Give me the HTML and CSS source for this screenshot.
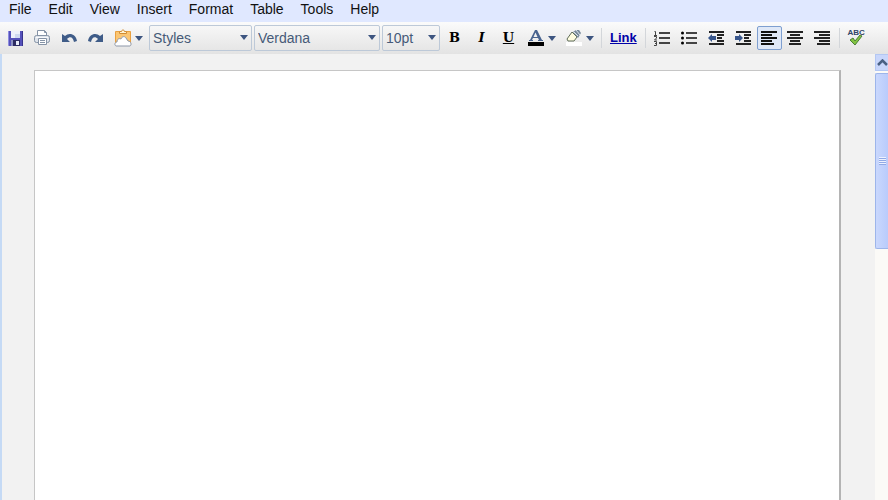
FILE: index.html
```html
<!DOCTYPE html>
<html lang="en">
<head>
<meta charset="utf-8">
<title>Document editor</title>
<link rel="stylesheet" href="styles.css">
</head>
<body>
<nav class="menubar" aria-label="Menu">
  <button>File</button>
  <button>Edit</button>
  <button>View</button>
  <button>Insert</button>
  <button>Format</button>
  <button>Table</button>
  <button>Tools</button>
  <button>Help</button>
</nav>

<div class="toolbar" role="toolbar" aria-label="Formatting">
  <button class="tool" aria-label="Save">
    <svg width="18" height="18" viewBox="0 0 18 18">
      <path d="M2 2h15v15H3l-1-1z" fill="#5551ba"/>
      <path d="M2 2h1v14H2z" fill="#8d8ce0"/>
      <path d="M16 2h1v15h-1z" fill="#37338c"/>
      <path d="M5 2h9v7H5z" fill="#eef1fb"/>
      <path d="M9 5h5v4H9z" fill="#cfd9f0"/>
      <path d="M5 11h9v6H5z" fill="#2c2b62"/>
      <path d="M10 12h3v4h-3z" fill="#e8ecf8"/>
      <path d="M5 11h2v6H5z" fill="#8b90c0"/>
    </svg>
  </button>
  <button class="tool" aria-label="Print">
    <svg width="18" height="18" viewBox="0 0 18 18" fill="none" stroke="#8593a6">
      <path d="M4.500 6V1.500h7l2 2V6" fill="#fff"/>
      <path d="M11.500 1.500v2h2"/>
      <rect x="1.500" y="6.500" width="15" height="7" rx="2" fill="#dfe4eb"/>
      <path d="M3 8.500h12" stroke="#f8f9fb"/>
      <path d="M5.500 9.500h8v6h-8z" fill="#fff"/>
      <path d="M7 11.500h5M7 13.500h5"/>
    </svg>
  </button>
  <button class="tool" aria-label="Undo">
    <svg width="18" height="18" viewBox="0 0 18 18">
      <path d="M2 5v8h8L7 10c3-3 6-2 7 3l3-1C16 5 9 3 5 7z" fill="#3f5c88"/>
    </svg>
  </button>
  <button class="tool" aria-label="Redo">
    <svg width="18" height="18" viewBox="0 0 18 18">
      <path d="M16 5v8H8l3-3C8 7 5 8 4 13l-3-1C2 5 9 3 13 7z" fill="#3f5c88"/>
    </svg>
  </button>
  <button class="tool tool-menu" aria-label="Web clipboard">
    <svg width="18" height="18" viewBox="0 0 18 18">
      <path d="M1.500 2.500h15v13h-15z" fill="#fbc673" stroke="#e9a040"/>
      <path d="M5.500 4.500v-2h2c0-2 3-2 3 0h2v2z" fill="#fff3d2" stroke="#d08c34"/>
      <path d="M2 17c-2-1-1-4 1-4 0-3 2-4 4-3 1-3 4-3 5-1l2 3c3 0 4 4 2 5z" fill="#fff" stroke="#8d97a8"/>
    </svg>
    <span class="arrow"></span>
  </button>

  <div class="pick pick-style">
    <select aria-label="Paragraph style"><option>Styles</option></select>
  </div>
  <div class="pick pick-font">
    <select aria-label="Font"><option>Verdana</option></select>
  </div>
  <div class="pick pick-size">
    <select aria-label="Font size"><option>10pt</option></select>
  </div>

  <button class="tool letter"><b>B</b></button>
  <button class="tool letter"><i>I</i></button>
  <button class="tool letter"><u>U</u></button>
  <button class="tool tool-menu" aria-label="Text color">
    <svg width="18" height="18" viewBox="0 0 18 18">
      <path d="M8 1h2l5 10h1v1h-5v-1h1l-1-2H6l-1 2h1v1H2v-1h1zM8.500 3.500L6.500 8h4z" fill="#49648f" fill-rule="evenodd"/>
      <path d="M1 13h16v4H1z" fill="#000"/>
    </svg>
    <span class="arrow"></span>
  </button>
  <button class="tool tool-menu" aria-label="Highlight color">
    <svg width="18" height="18" viewBox="0 0 18 18">
      <path d="M1 13h16v4H1z" fill="#fff"/>
      <path d="M7 3l5 5-3 4H3l-1-2z" fill="#fffde0" stroke="#5f6d58"/>
      <path d="M8 3l3-2h3l2 3-3 5z" fill="#788a9b"/>
      <path d="M11 1l4 5M9 3l4 4" stroke="#dfe5ea"/>
    </svg>
    <span class="arrow"></span>
  </button>
  <span class="divider"></span>
  <a class="link" href="#link">Link</a>
  <span class="divider"></span>
  <button class="tool" aria-label="Numbered list">
    <svg width="18" height="18" viewBox="0 0 18 18" fill="none">
      <path d="M6 4h11M6 9h11M6 14h11" stroke="#444" stroke-width="2"/>
      <path d="M1.500 2.500h1v4M1 6.500h3M1 7.500h2.500v1.500L1.500 11H4M1 12.500h2.500v4H1M2 14.500h1" stroke="#444"/>
    </svg>
  </button>
  <button class="tool" aria-label="Bulleted list">
    <svg width="18" height="18" viewBox="0 0 18 18">
      <path d="M6 4h11M6 9h11M6 14h11" stroke="#444" stroke-width="2"/>
      <circle cx="2.500" cy="4" r="1.500"/><circle cx="2.500" cy="9" r="1.500"/><circle cx="2.500" cy="14" r="1.500"/>
    </svg>
  </button>
  <button class="tool" aria-label="Decrease indent">
    <svg width="18" height="18" viewBox="0 0 18 18">
      <path d="M2 3h15M10 6h7M10 9h5M10 12h7M2 15h15" stroke="#222" stroke-width="2"/>
      <path d="M1 9l4-4v2h4v4H5v2z" fill="#38568c"/>
    </svg>
  </button>
  <button class="tool" aria-label="Increase indent">
    <svg width="18" height="18" viewBox="0 0 18 18">
      <path d="M2 3h15M10 6h7M10 9h5M10 12h7M2 15h15" stroke="#222" stroke-width="2"/>
      <path d="M9 9L5 5v2H1v4h4v2z" fill="#38568c"/>
    </svg>
  </button>
  <button class="tool pressed" aria-label="Align left" aria-pressed="true">
    <svg width="18" height="18" viewBox="0 0 18 18">
      <path d="M1 3h16M1 6h11M1 9h16M1 12h11M1 15h13" stroke="#111" stroke-width="2"/>
    </svg>
  </button>
  <button class="tool" aria-label="Align center">
    <svg width="18" height="18" viewBox="0 0 18 18">
      <path d="M1 3h16M4 6h10M1 9h16M4 12h10M3 15h12" stroke="#222" stroke-width="2"/>
    </svg>
  </button>
  <button class="tool" aria-label="Align right">
    <svg width="18" height="18" viewBox="0 0 18 18">
      <path d="M1 3h16M6 6h11M1 9h16M6 12h11M4 15h13" stroke="#222" stroke-width="2"/>
    </svg>
  </button>
  <span class="divider"></span>
  <button class="tool spell" aria-label="Check spelling">
    <span class="abc">ABC</span>
    <svg width="14" height="11" viewBox="0 0 14 11">
      <path d="M1 5l3-2 2 3 5-6 2 1-7 9z" fill="#83c441" stroke="#4a7f37"/>
    </svg>
  </button>
</div>

<div class="workspace">
  <main class="canvas">
    <div class="page" role="textbox" aria-label="Document" aria-multiline="true" contenteditable="true"></div>
  </main>
  <div class="scroll">
    <button class="scroll-up" aria-label="Scroll up">
      <svg width="11" height="8" viewBox="0 0 11 8"><path d="M1 6l4.500-4.500L10 6" fill="none" stroke="#4a6184" stroke-width="2.500"/></svg>
    </button>
    <div class="thumb"><span class="grip"></span></div>
  </div>
</div>
</body>
</html>
```
FILE: styles.css
```css
* {
  box-sizing: border-box;
}

body {
  margin: 0;
  height: 100vh;
  display: flex;
  flex-direction: column;
  overflow: hidden;
  background: #f2f2f2;
  font: 14px/18px "Liberation Sans", Arial, sans-serif;
}

button {
  margin: 0;
  padding: 0;
  border: 0;
  background: none;
  color: inherit;
  font: inherit;
}

svg {
  display: block;
  flex: none;
}

.menubar {
  display: flex;
  gap: 17px;
  padding: 0 9px 4px;
  background: #e0e8ff;
  color: #111;
}

.toolbar {
  display: flex;
  align-items: center;
  height: 32px;
  padding-left: 1px;
  background: linear-gradient(#fbfbfb, #e3e3e3);
}

.tool {
  flex: none;
  display: flex;
  align-items: center;
  justify-content: center;
  width: 27px;
  height: 24px;
}

.tool-menu {
  width: 38px;
  gap: 3px;
}

.arrow,
.pick::after {
  border: 4px solid transparent;
  border-top: 5px solid #3d5580;
  border-bottom: 0;
}

.pressed {
  width: 25px;
  border: 1px solid #7e9fd0;
  border-radius: 2px;
  background: #dfe8f7;
}

.pick {
  position: relative;
  flex: none;
  margin-right: 2px;
}

.pick::after {
  content: "";
  position: absolute;
  top: 10px;
  right: 4px;
  pointer-events: none;
}

.pick select {
  appearance: none;
  display: block;
  width: 100%;
  height: 26px;
  padding: 0 3px;
  border: 1px solid #bdc9d8;
  border-radius: 2px;
  background: linear-gradient(#f7f7f7, #e6e6e6);
  color: #465a78;
  font: 14px/18px "Liberation Sans", Arial, sans-serif;
}

.pick-style {
  width: 103px;
  margin-left: 2px;
}

.pick-font {
  width: 126px;
}

.pick-size {
  width: 58px;
  margin-right: 1px;
}

.letter {
  color: #000;
  font: bold 13px/18px "DejaVu Serif", serif;
}

.divider {
  flex: none;
  width: 1px;
  height: 20px;
  margin: 0 3px;
  background: #d3d6da;
}

.link {
  margin: 0 5px;
  color: #0000a8;
  font-weight: bold;
  font-size: 13px;
}

.spell {
  flex-direction: column;
}

.abc {
  height: 5px;
  color: #2f4468;
  font-weight: bold;
  font-size: 8px;
  line-height: 5px;
}

.workspace {
  flex: 1;
  display: flex;
  min-height: 0;
}

.canvas {
  flex: 1;
  display: flex;
  padding: 16px 34px 0 32px;
  border-left: 2px solid #c5daf5;
}

.page {
  flex: 1;
  padding: 48px;
  border: solid #c6c6c6;
  border-width: 1px 2px 0 1px;
  border-right-color: #b4b4b4;
  background: #fff;
  outline: 0;
}

.scroll {
  display: flex;
  flex-direction: column;
  gap: 2px;
  width: 13px;
  background: #fbfaf7;
}

.scroll-up {
  display: flex;
  align-items: center;
  justify-content: center;
  height: 17px;
  border: 1px solid #b3c7f3;
  border-right: 0;
  background: #c8d6fb;
}

.thumb {
  display: flex;
  align-items: center;
  justify-content: center;
  height: 176px;
  border: 1px solid #9db5ea;
  border-right: 0;
  border-radius: 2px 0 0 2px;
  background: linear-gradient(90deg, #cad8fd, #b9cbfb);
}

.grip {
  width: 7px;
  height: 8px;
  background: repeating-linear-gradient(#edf2ff 0 1px, #91aae6 1px 2px);
}
```
